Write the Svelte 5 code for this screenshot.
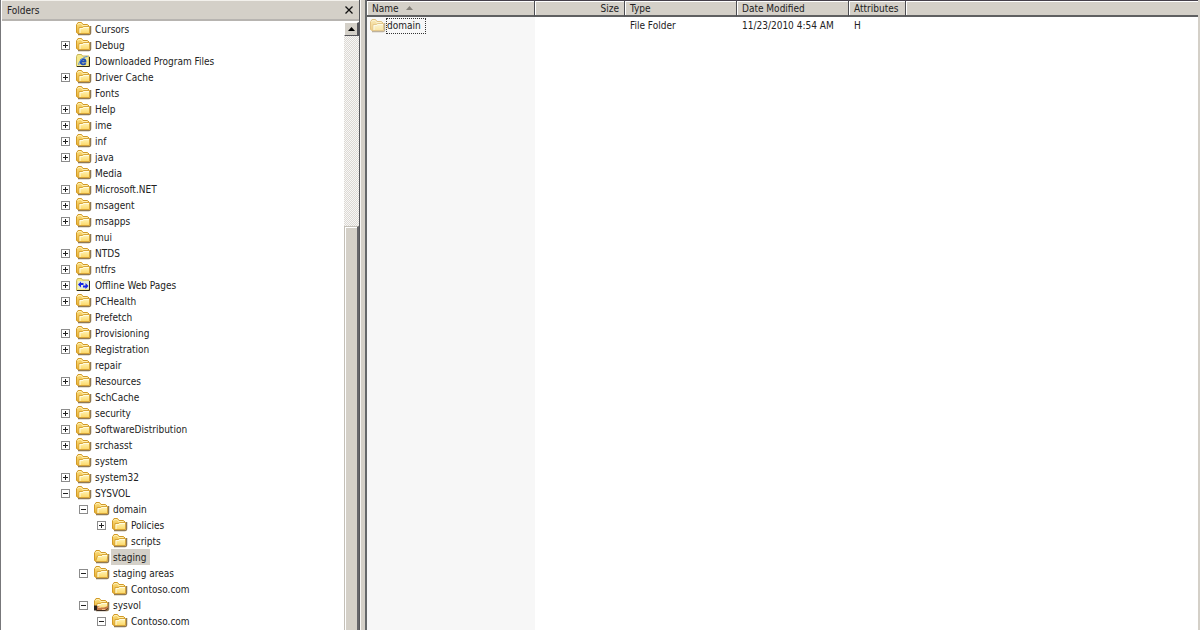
<script>
  const tree = [
    ['Cursors', 0, ''], ['Debug', 0, '+'], ['Downloaded Program Files', 0, '', 'web'],
    ['Driver Cache', 0, '+'], ['Fonts', 0, ''], ['Help', 0, '+'], ['ime', 0, '+'],
    ['inf', 0, '+'], ['java', 0, '+'], ['Media', 0, ''], ['Microsoft.NET', 0, '+'],
    ['msagent', 0, '+'], ['msapps', 0, '+'], ['mui', 0, ''], ['NTDS', 0, '+'],
    ['ntfrs', 0, '+'], ['Offline Web Pages', 0, '+', 'sync'], ['PCHealth', 0, '+'],
    ['Prefetch', 0, ''], ['Provisioning', 0, '+'], ['Registration', 0, '+'],
    ['repair', 0, ''], ['Resources', 0, '+'], ['SchCache', 0, ''], ['security', 0, '+'],
    ['SoftwareDistribution', 0, '+'], ['srchasst', 0, '+'], ['system', 0, ''],
    ['system32', 0, '+'], ['SYSVOL', 0, '-'], ['domain', 1, '-'], ['Policies', 2, '+'],
    ['scripts', 2, ''], ['staging', 1, '', 'open'], ['staging areas', 1, '-'],
    ['Contoso.com', 2, ''], ['sysvol', 1, '-', 'shared'], ['Contoso.com', 2, '-']
  ].map(([name, level, toggle, icon = 'folder']) => ({ name, level, toggle, icon }));

  let selected = $state(33);
</script>

{#snippet folder(kind)}
  <svg class="icon" width="16" height="14" viewBox="0 0 16 14" aria-hidden="true">
    {#if kind === 'web' || kind === 'sync'}
      <path d="M.5 12.500V2.500L1.500 .5H5.500L6.500 2H13V12.500Z" fill="#f5e98c" stroke="#c9b65a" />
      <path d="M1 12.500H13.500V3" fill="none" stroke="#2f2b18" />
      {#if kind === 'web'}
        <path d="M4.500 7.500H9.500C9.800 4.200 5 4.200 4.600 7.500C4.400 10.800 8.500 11 9.700 9.200" fill="none" stroke="#1f4fb8" stroke-width="1.800" />
        <path d="M3 11C1.500 9 7 2.500 11.500 2.500" fill="none" stroke="#4f8ae4" />
      {:else}
        <rect x="2" y="3" width="11" height="8" fill="#e4ead6" />
        <path d="M2 6.500 5 3.500V5H7.500V7H5V9.500ZM12.500 8 9.500 11V9.500H7V7.500H9.500V5Z" fill="#1526e8" />
      {/if}
    {:else}
      <path d="M2 12.500H13Q14.500 12.500 14.500 10.500V4" fill="none" stroke="#7d6136" stroke-opacity=".85" stroke-width="1.500" />
      <path d="M.5 10.500V3L2 .5H5.500L7 2.500H11.500L13 4V11.500H2Z" fill="url(#folder-back)" stroke="#d29a28" />
      <path d="M1.500 3 2.500 1.500H5L6.500 3.500H11.500" fill="none" stroke="#fff0b0" />
      {#if kind === 'open'}
        <path d="M1.500 11.500 3.500 6H7L8 4.500H14L13 11.500Z" fill="url(#folder-front)" stroke="#d8a63a" />
        <path d="M4 6.500H7.500L8.500 5.500H13" fill="none" stroke="#fffbe0" />
      {:else}
        <path d="M3 11.500V5.500H6.500L7.500 4.500H13.500V11.500Z" fill="url(#folder-front)" stroke="#d8a63a" />
        <path d="M4 11V6.500H7L8 5.500H13" fill="none" stroke="#fffbe0" />
      {/if}
      {#if kind === 'shared'}
        <path d="M1 8.500 4 8 7 9.500H10L14 8V11L11 13H3L1 11Z" fill="#c47a46" />
        <path d="M0 7.500H3V12.500H0Z" fill="#29221e" />
        <path d="M4 9.500H7M8 11.500H11" stroke="#f2bd8c" />
        <path d="M3 12.500H11.500L14 10.500" fill="none" stroke="#3b2a20" />
      {/if}
    {/if}
  </svg>
{/snippet}

<svg class="paints" width="0" height="0" aria-hidden="true">
  <linearGradient id="folder-back" x1="0" y1="0" x2="0" y2="1">
    <stop offset="0" stop-color="#fbdf83" /><stop offset="1" stop-color="#e9ae2b" />
  </linearGradient>
  <linearGradient id="folder-front" x1="0" y1="0" x2="0" y2="1">
    <stop offset="0" stop-color="#fff6bd" /><stop offset="1" stop-color="#fcd765" />
  </linearGradient>
</svg>

<main class="explorer">
  <section class="folders" aria-label="Folders">
    <header class="pane-head">
      <h1>Folders</h1>
      <button class="close" aria-label="Close">
        <svg width="8" height="8" viewBox="0 0 8 8"><path d="M.5 .5 7.500 7.500M7.500 .5 .5 7.500" stroke="#111" stroke-width="1.300" /></svg>
      </button>
    </header>
    <div class="pane-body">
      <ul class="tree">
        {#each tree as item, i}
          <li class="level-{item.level}">
            {#if item.toggle}
              <button class="toggle" aria-label="Toggle {item.name}" aria-expanded={item.toggle === '-'}>
                <svg width="9" height="9" viewBox="0 0 9 9" shape-rendering="crispEdges">
                  <rect x=".5" y=".5" width="8" height="8" fill="#fff" stroke="#8c8c8c" />
                  <path d={item.toggle === '+' ? 'M2 4.500H7M4.500 2V7' : 'M2 4.500H7'} stroke="#222" />
                </svg>
              </button>
            {:else}
              <span class="toggle"></span>
            {/if}
            {@render folder(item.icon)}
            <button class="name" class:selected={selected === i} onclick={() => (selected = i)}>{item.name}</button>
          </li>
        {/each}
      </ul>
      <div class="scrollbar">
        <button class="up" aria-label="Scroll up">
          <svg width="7" height="4" viewBox="0 0 7 4"><path d="M0 4 3.500 0 7 4Z" fill="#000" /></svg>
        </button>
        <div class="track"></div>
        <div class="thumb"></div>
      </div>
    </div>
  </section>
  <div class="splitter"></div>
  <section class="files" aria-label="Files">
    <table>
      <colgroup>
        <col class="c-name" /><col class="c-size" /><col class="c-type" /><col class="c-date" /><col class="c-attr" /><col />
      </colgroup>
      <thead>
        <tr>
          <th>Name <svg class="sort" width="7" height="4" viewBox="0 0 7 4" aria-hidden="true"><path d="M0 4 3.500 0 7 4Z" fill="#85817a" /></svg></th>
          <th class="size">Size</th>
          <th>Type</th>
          <th>Date Modified</th>
          <th>Attributes</th>
          <td></td>
        </tr>
      </thead>
      <tbody>
        <tr>
          <td class="file"><div><span class="faded">{@render folder('folder')}</span><a href="#domain">domain</a></div></td>
          <td></td>
          <td>File Folder</td>
          <td>11/23/2010 4:54 AM</td>
          <td>H</td>
          <td></td>
        </tr>
      </tbody>
    </table>
  </section>
</main>

<style>
  :global(body) { margin: 0; background: #fff; }
  .paints { position: absolute; }
  .explorer {
    display: flex;
    height: 100vh;
    overflow: hidden;
    color: #222;
    font: 10px/14px "DejaVu Sans Condensed", "Noto Sans", sans-serif;
  }
  button {
    padding: 0;
    border: 0;
    background: none;
    color: inherit;
    font: inherit;
  }
  svg { display: block; flex: none; }
  .folders {
    display: flex;
    flex-direction: column;
    flex: 0 0 30%;
    box-sizing: border-box;
    min-width: 0;
    border-left: 1px solid #77777a;
    border-right: 1px solid #55565a;
  }
  .pane-head {
    display: flex;
    align-items: center;
    justify-content: space-between;
    height: 18px;
    flex: none;
    padding: 0 6px 0 5px;
    border-top: 1px solid #f3f1ec;
    border-bottom: 2px solid #b7b4b0;
    margin-left: 1px;
    background: #d4d0c8;
  }
  h1 { margin: 0; padding-top: 1px; font: inherit; }
  .pane-body { display: flex; flex: 1; min-height: 0; }
  .tree {
    flex: 1;
    min-width: 0;
    margin: 0;
    padding: 0 0 0 60px;
    overflow: hidden;
    list-style: none;
  }
  li { display: flex; align-items: center; height: 16px; }
  .level-1 { padding-left: 18px; }
  .level-2 { padding-left: 36px; }
  .toggle { width: 9px; height: 9px; margin-right: 6px; flex: none; }
  .name { height: 16px; padding: 1px 4px 0 2px; margin-left: 1px; white-space: nowrap; }
  .selected { background: #d4d0c8; }
  .scrollbar { display: flex; flex-direction: column; width: 15px; flex: none; padding-top: 1px; }
  .up {
    display: grid;
    place-items: center;
    height: 14px;
    flex: none;
    border: 1px solid #fff;
    border-right: 2px solid #55555a;
    border-bottom: 1px solid #55555a;
    background: #d4d0c8;
  }
  .track { flex: 190; background: repeating-conic-gradient(#dcd9d4 0 25%, #f8f7f6 0 50%) 0 0 / 2px 2px; }
  .thumb {
    flex: 403;
    border: 1px solid #c4c0b8;
    border-right: 2px solid #66666a;
    border-bottom: 0;
    background: #d4d0c8;
    box-shadow: inset 1px 1px #fff;
  }
  .splitter {
    width: 4px;
    flex: none;
    border-left: 1px solid #f8f7f4;
    border-right: 2px solid #65686a;
    background: #d4d0c8;
  }
  .files {
    flex: 1;
    min-width: 0;
    border-right: 2px solid #d4d0c8;
    background: linear-gradient(#f7f7f7, #f7f7f7) 0 0 / 168px 100% no-repeat;
  }
  table { width: 100%; table-layout: fixed; border-collapse: separate; border-spacing: 0; }
  .c-name { width: 168px; }
  .c-size { width: 90px; }
  .c-type, .c-date { width: 112px; }
  .c-attr { width: 57px; }
  thead th, thead td {
    height: 12px;
    padding: 2px 5px 0;
    border-top: 1px solid #45404a;
    border-bottom: 2px solid #5f6061;
    background: #d4d0c8;
    box-shadow: inset 1px 1px #fff;
    line-height: 12px;
  }
  th { border-right: 1px solid #4c4c50; font-weight: normal; text-align: left; white-space: nowrap; }
  th.size { text-align: right; }
  .sort { display: inline-block; margin-left: 5px; vertical-align: 2px; }
  tbody td { height: 17px; padding: 0 5px; white-space: nowrap; }
  tbody .file { padding: 0 0 0 3px; }
  .file div { display: flex; align-items: center; }
  .faded { opacity: .55; }
  .file a { padding: 0 4px 0 0; border: 1px dotted #333; color: inherit; text-decoration: none; }
</style>
